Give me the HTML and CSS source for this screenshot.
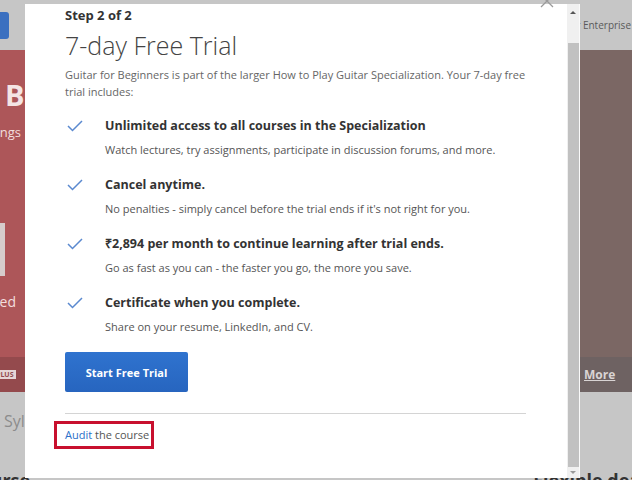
FILE: index.html
```html
<!DOCTYPE html>
<html lang="en">
<head>
    <meta charset="UTF-8">
    <meta name="viewport" content="width=device-width, initial-scale=1.0">
    <title>7-day Free Trial</title>
    <link rel="stylesheet" href="styles.css">
</head>
<body>
    <div class="page">
        <header class="topbar">
            <span class="nav-btn"></span>
            <span class="enterprise">For Enterprise</span>
        </header>

        <section class="hero">
            <div class="hero-main">
                <h1 class="hero-title">Beginners</h1>
                <p class="hero-sub">Learn the strings</p>
                <div class="hero-card"></div>
                <p class="hero-enrolled">Enrolled</p>
            </div>
            <div class="hero-media"></div>
        </section>

        <div class="hero-band">
            <div class="band-main"><span class="plus">PLUS</span></div>
            <div class="band-media"><a href="#" class="more">More</a></div>
        </div>

        <nav class="tabs">Syllabus</nav>

        <div class="bottom-row">
            <span class="course">Course</span>
            <span class="deadlines">Flexible deadlines</span>
        </div>
    </div>

    <div class="modal">
        <svg class="close" width="14" height="14" viewBox="0 0 14 14">
            <path d="M1 1 L13 13 M13 1 L1 13" stroke="#9a9a9a" stroke-width="1.3" fill="none"/>
        </svg>
        <div class="modal-body">
            <div class="step">Step 2 of 2</div>
            <h2 class="modal-title">7-day Free Trial</h2>
            <p class="intro">Guitar for Beginners is part of the larger How to Play Guitar Specialization. Your 7-day free trial includes:</p>

            <ul class="perks">
                <li>
                    <svg class="check" width="16" height="12" viewBox="0 0 16 12"><path d="M1 6 L5.5 10.5 L15 1" stroke="#5a89cf" stroke-width="1.5" fill="none"/></svg>
                    <div>
                        <div class="perk-title">Unlimited access to all courses in the Specialization</div>
                        <div class="perk-desc">Watch lectures, try assignments, participate in discussion forums, and more.</div>
                    </div>
                </li>
                <li>
                    <svg class="check" width="16" height="12" viewBox="0 0 16 12"><path d="M1 6 L5.5 10.5 L15 1" stroke="#5a89cf" stroke-width="1.5" fill="none"/></svg>
                    <div>
                        <div class="perk-title">Cancel anytime.</div>
                        <div class="perk-desc">No penalties - simply cancel before the trial ends if it's not right for you.</div>
                    </div>
                </li>
                <li>
                    <svg class="check" width="16" height="12" viewBox="0 0 16 12"><path d="M1 6 L5.5 10.5 L15 1" stroke="#5a89cf" stroke-width="1.5" fill="none"/></svg>
                    <div>
                        <div class="perk-title">₹2,894 per month to continue learning after trial ends.</div>
                        <div class="perk-desc">Go as fast as you can - the faster you go, the more you save.</div>
                    </div>
                </li>
                <li>
                    <svg class="check" width="16" height="12" viewBox="0 0 16 12"><path d="M1 6 L5.5 10.5 L15 1" stroke="#5a89cf" stroke-width="1.5" fill="none"/></svg>
                    <div>
                        <div class="perk-title">Certificate when you complete.</div>
                        <div class="perk-desc">Share on your resume, LinkedIn, and CV.</div>
                    </div>
                </li>
            </ul>

            <button class="start-btn">Start Free Trial</button>

            <hr class="divider">

            <div class="audit"><a href="#">Audit</a> the course</div>
        </div>
        <div class="scrollbar">
            <span class="arrow-up"></span>
            <span class="thumb"></span>
            <span class="arrow-down"></span>
        </div>
    </div>
</body>
</html>
```

FILE: styles.css
```css
body {
    margin: 0;
    font-family: "Open Sans", Arial, sans-serif;
    width: 632px;
    height: 480px;
    overflow: hidden;
    position: relative;
    background-color: #c6c6c6;
}
.page {
    width: 632px;
}
.topbar {
    height: 50px;
    display: flex;
    align-items: center;
    justify-content: space-between;
    background-color: #c6c6c6;
}
.nav-btn {
    width: 9px;
    height: 27px;
    background-color: #3b70c0;
    border-radius: 0 3px 3px 0;
}
.enterprise {
    font-size: 10px;
    color: #5a5a5a;
    margin-right: 1px;
}
.hero {
    display: flex;
    height: 307px;
}
.hero-main {
    flex: 1;
    background-color: #ad5659;
    color: #f2dede;
    padding-left: 5px;
}
.hero-title {
    margin: 27px 0 0;
    font-size: 29px;
    font-weight: 700;
    line-height: 36px;
    color: #f4e4e4;
}
.hero-sub {
    margin: 10px 0 0 -86px;
    font-size: 13px;
}
.hero-card {
    width: 0;
    height: 53px;
    margin: 82px 0 0 -5px;
    border-left: 5px solid #d6cccc;
}
.hero-enrolled {
    margin: 16px 0 0 -43px;
    font-size: 14px;
}
.hero-media {
    width: 52px;
    background-color: #7b6764;
}
.hero-band {
    display: flex;
    height: 35px;
}
.band-main {
    flex: 1;
    background-color: #944a4d;
    display: flex;
    align-items: center;
}
.plus {
    font-size: 7px;
    font-weight: 700;
    color: #944a4d;
    background-color: #e6d6d6;
    padding: 0 2px 0 0;
    margin-left: -4px;
    line-height: 9px;
}
.band-media {
    width: 52px;
    background-color: #6e6262;
    display: flex;
    align-items: center;
}
.more {
    font-size: 12px;
    font-weight: 700;
    color: #d9d4d4;
    margin-left: 4px;
}
.tabs {
    height: 80px;
    padding: 18px 0 0 4px;
    box-sizing: border-box;
    font-size: 16px;
    color: #8c8c8c;
    background-color: #c6c6c6;
}
.bottom-row {
    display: flex;
    justify-content: space-between;
    font-size: 18px;
    font-weight: 700;
    color: #333;
    margin-top: -4px;
}
.course {
    margin-left: -32px;
}
.deadlines {
    margin-right: -62px;
}
.modal {
    position: absolute;
    left: 25px;
    top: 4px;
    width: 555px;
    height: 474px;
    display: flex;
    background-color: #fff;
}
.close {
    position: absolute;
    left: 515px;
    top: -10px;
}
.modal-body {
    flex: 1;
    padding: 2px 41px 0 40px;
    color: #444;
}
.step {
    font-size: 13px;
    font-weight: 700;
    line-height: 18px;
    color: #333;
}
.modal-title {
    margin: 5px 0 0;
    font-size: 25px;
    font-weight: 300;
    line-height: 32px;
    color: #444;
}
.intro {
    margin: 5px 0 0;
    font-size: 11px;
    line-height: 17px;
    color: #666;
}
.perks {
    list-style: none;
    margin: 16px 0 0;
    padding: 0;
}
.perks li {
    display: flex;
    margin-bottom: 16px;
}
.check {
    margin: 4px 22px 0 2px;
    flex-shrink: 0;
}
.perk-title {
    font-size: 12.5px;
    font-weight: 700;
    line-height: 20px;
    color: #333;
}
.perk-desc {
    margin-top: 5px;
    font-size: 11px;
    line-height: 18px;
    color: #555;
}
.start-btn {
    display: block;
    width: 123px;
    height: 40px;
    border: none;
    border-radius: 2px;
    background: linear-gradient(#2f73cf, #2765bf);
    color: #fff;
    font-family: "Open Sans", Arial, sans-serif;
    font-size: 11px;
    font-weight: 700;
    cursor: pointer;
}
.divider {
    margin: 21px 0 0;
    border: none;
    border-top: 1px solid #d4d4d4;
}
.audit {
    display: inline-block;
    margin: 7px 0 0 -11px;
    padding: 1px 2px 1px 8px;
    border: 3px solid #c8102e;
    font-size: 11px;
    line-height: 20px;
    color: #555;
}
.audit a {
    color: #2a6fc9;
    text-decoration: none;
}
.scrollbar {
    width: 12px;
    display: flex;
    flex-direction: column;
    align-items: center;
    background-color: #f0f0f0;
    border-right: 1px solid #fafafa;
}
.arrow-up {
    margin-top: 7px;
    border-left: 3px solid transparent;
    border-right: 3px solid transparent;
    border-bottom: 3px solid #555;
}
.thumb {
    width: 11px;
    height: 424px;
    margin-top: 29px;
    background-color: #c1c1c1;
}
.arrow-down {
    margin-top: 4px;
    border-left: 3px solid transparent;
    border-right: 3px solid transparent;
    border-top: 3px solid #999;
}
```
